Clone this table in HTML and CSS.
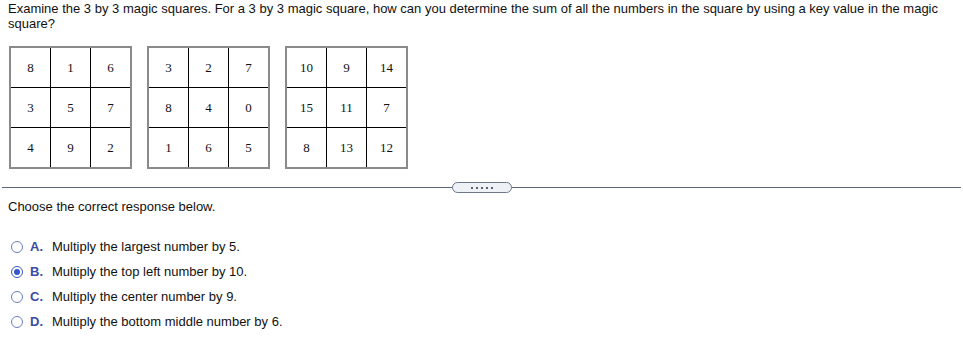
FILE: index.html
```html
<!DOCTYPE html>
<html>
<head>
<meta charset="utf-8">
<link rel="stylesheet" href="styles.css">
</head>
<body>
<div class="page">
  <p class="question">Examine the 3 by 3 magic squares. For a 3 by 3 magic square, how can you determine the sum of all the numbers in the square by using a key value in the magic square?</p>
  <div class="squares">
    <table class="magic">
      <tr><td>8</td><td>1</td><td>6</td></tr>
      <tr><td>3</td><td>5</td><td>7</td></tr>
      <tr><td>4</td><td>9</td><td>2</td></tr>
    </table>
    <table class="magic">
      <tr><td>3</td><td>2</td><td>7</td></tr>
      <tr><td>8</td><td>4</td><td>0</td></tr>
      <tr><td>1</td><td>6</td><td>5</td></tr>
    </table>
    <table class="magic">
      <tr><td>10</td><td>9</td><td>14</td></tr>
      <tr><td>15</td><td>11</td><td>7</td></tr>
      <tr><td>8</td><td>13</td><td>12</td></tr>
    </table>
  </div>
</div>
<div class="divider">
  <span class="line"></span>
  <span class="pill"><i></i><i></i><i></i><i></i><i></i></span>
  <span class="line"></span>
</div>
<div class="page">
  <p class="prompt">Choose the correct response below.</p>
  <ul class="options">
    <li><span class="radio"></span><span class="letter">A.</span><span class="text">Multiply the largest number by 5.</span></li>
    <li><span class="radio checked"></span><span class="letter">B.</span><span class="text">Multiply the top left number by 10.</span></li>
    <li><span class="radio"></span><span class="letter">C.</span><span class="text">Multiply the center number by 9.</span></li>
    <li><span class="radio"></span><span class="letter">D.</span><span class="text">Multiply the bottom middle number by 6.</span></li>
  </ul>
</div>
</body>
</html>
```
FILE: styles.css
```css
html, body {
  margin: 0;
  padding: 0;
  background: #fff;
}
body {
  font-family: "Liberation Sans", Arial, sans-serif;
  font-size: 13px;
  line-height: 15px;
  color: #111;
}
.page {
  padding: 0 8px;
}
.question {
  margin: 0;
  padding-top: 1px;
}
.squares {
  display: flex;
  gap: 15px;
  margin: 15px 0 0 1px;
}
.magic {
  border-collapse: collapse;
  border: 2px solid #8a8a8a;
}
.magic td {
  border: 1px solid #000;
  width: 39px;
  height: 39px;
  padding: 0;
  text-align: center;
  vertical-align: middle;
  font-family: "Liberation Serif", "Times New Roman", serif;
  font-size: 13px;
  color: #111;
}
.divider {
  display: flex;
  align-items: center;
  margin: 13px 2px 0 2px;
  height: 11px;
}
.line {
  flex: 1;
  height: 1px;
  background: #59667a;
}
.pill {
  width: 58px;
  height: 9px;
  border: 1px solid #6b7686;
  border-radius: 6px;
  background: #eef2f6;
  display: flex;
  align-items: center;
  justify-content: center;
  gap: 3px;
}
.pill i {
  display: block;
  width: 2px;
  height: 2px;
  background: #5a6270;
}
.prompt {
  margin: 6px 0 0 0;
}
.options {
  list-style: none;
  margin: 20px 0 0 0;
  padding: 0;
}
.options li {
  display: flex;
  align-items: center;
  height: 25px;
}
.radio {
  box-sizing: border-box;
  width: 12px;
  height: 12px;
  border: 1px solid #6b7fbf;
  border-radius: 50%;
  margin-left: 3px;
  display: flex;
  align-items: center;
  justify-content: center;
}
.radio.checked {
  border: 1.5px solid #3556c8;
}
.radio.checked::after {
  content: "";
  width: 6px;
  height: 6px;
  border-radius: 50%;
  background: #3556c8;
}
.letter {
  margin-left: 7px;
  width: 22px;
  color: #3d4aa6;
  font-weight: bold;
}
.text {
  color: #111;
}
```
